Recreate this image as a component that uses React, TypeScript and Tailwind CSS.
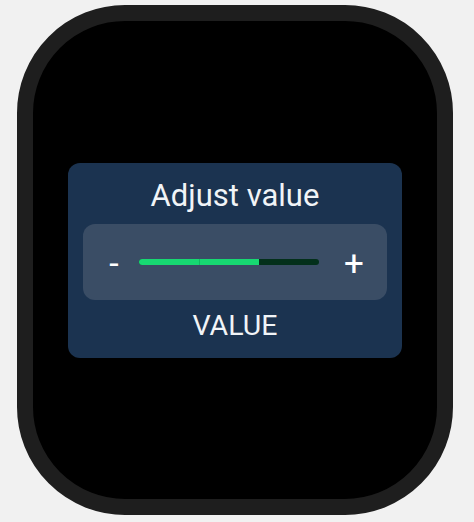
import React from "react"

const font = { fontFamily: "Roboto, 'Noto Sans', sans-serif" }

// segmented level track: two lit segments out of three
function LevelTrack({ level, steps }: { level: number; steps: number }) {
  return (
    <div className="flex h-[6px] w-[180px] overflow-hidden rounded-full bg-[#03301b]">
      {Array.from({ length: steps }).map((_, i) => (
        <div
          key={i}
          className={
            i < level
              ? "h-full flex-1 bg-[#17d872] border-l border-[#12b862] first:border-l-0"
              : "h-full flex-1"
          }
        />
      ))}
    </div>
  )
}

export default function App() {
  return (
    <div className="min-h-[522px] w-[474px] bg-[#f1f1f1] pl-[17px] pt-[5px]" style={font}>
      <div className="flex h-[510px] w-[436px] items-center justify-center rounded-[108px] border-[16px] border-[#1e1e1e] bg-black">
        <div className="flex w-[334px] flex-col items-center rounded-[12px] bg-[#1b3350] px-[15px] pb-[14px] pt-[13px] text-white">
          <div className="h-[40px] text-[31px] leading-[40px] text-[#f1f4f7]">Adjust value</div>
          <div className="mt-[8px] flex h-[76px] w-full items-center rounded-[12px] bg-[#3a4d65] pl-[16px]">
            <button className="flex w-[30px] justify-center pt-[3px] text-[34px] leading-none text-white">-</button>
            <div className="ml-[10px]">
              <LevelTrack level={2} steps={3} />
            </div>
            <button className="ml-[20px] flex w-[30px] justify-center pt-[3px] text-[35px] leading-none text-white">+</button>
          </div>
          <div className="mt-[8px] h-[36px] text-[28.5px] leading-[36px] text-[#f1f4f7]">VALUE</div>
        </div>
      </div>
    </div>
  )
}
